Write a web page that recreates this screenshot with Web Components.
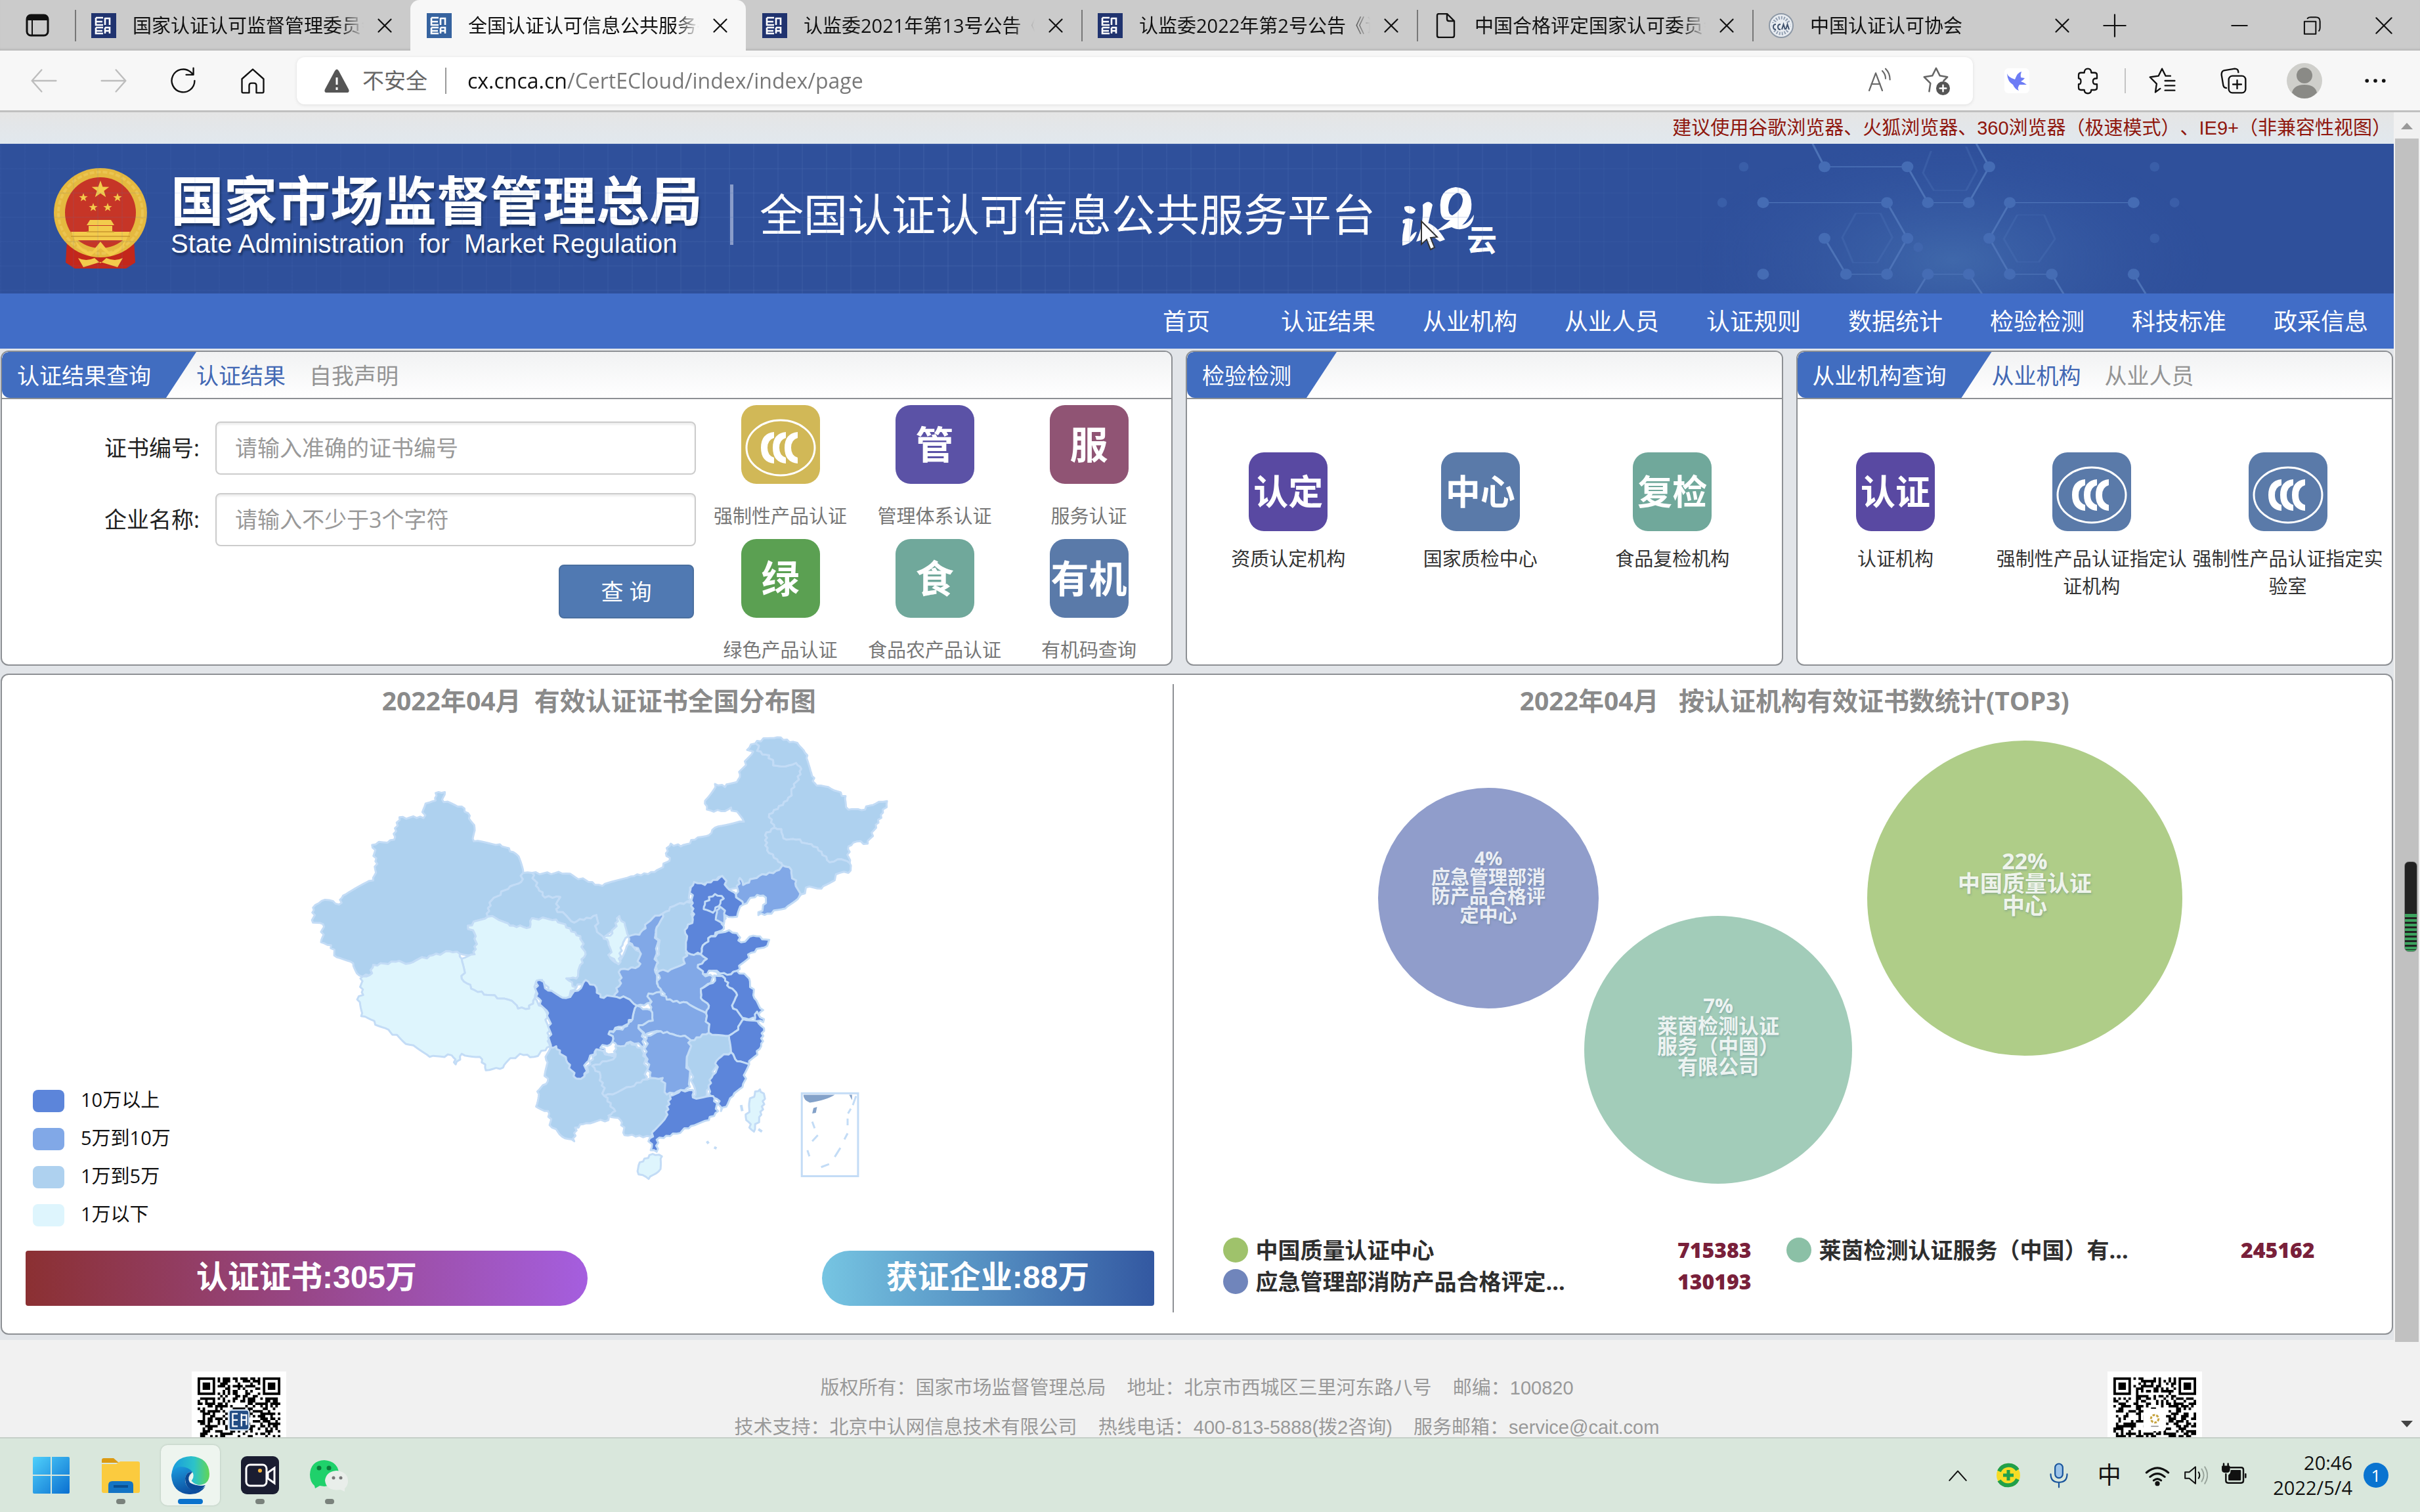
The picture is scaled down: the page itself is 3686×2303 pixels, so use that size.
<!DOCTYPE html>
<html lang="zh-CN">
<head>
<meta charset="utf-8">
<title>全国认证认可信息公共服务平台</title>
<style>
  html, body { margin: 0; height: 100%; }
  body {
    display: flex;
    flex-direction: column;
    overflow: hidden;
    background: #e2e5e9;
    color: #222;
    font: 29px/40px "Open Sans", "Noto Sans CJK SC", sans-serif;
  }
  main { flex: 1; min-height: 0; display: flex; overflow: hidden; }
  .page { flex: 1; min-width: 0; display: flex; flex-direction: column; }
  .page > * { flex-shrink: 0; }
  .notice {
    margin: 0;
    padding-right: 4px;
    background: linear-gradient(#e5e5e5, #e1e8ee);
    color: #8f170e;
    font-family: "Liberation Sans", "Noto Sans CJK SC", sans-serif;
    line-height: 48px;
    text-align: right;
    text-spacing-trim: space-all;
  }
  .row {
    display: grid;
    grid-template-columns: 1786fr 910fr 910fr;
    gap: 20px;
    margin: 3px 1px 0;
  }
  .query { display: flex; align-items: flex-start; }
  .grid { display: grid; grid-template-columns: repeat(3, 235px); row-gap: 14px; padding: 9px 8px 0 0; }
  .trio { display: grid; grid-template-columns: repeat(3, 1fr); padding: 81px 20px 0 8px; }
  .wide { padding-left: 0; padding-right: 9px; }
  .stats {
    display: grid;
    grid-template-columns: 1784fr 1859fr;
    margin: 12px 1px 8px;
    border: 2px solid #8d9094;
    border-radius: 12px;
    background: #fff;
  }
  .pane { display: flex; flex-direction: column; margin: 14px 0 32px; }
  .pane + .pane { border-left: 2px solid #8d9094; }
  h2 {
    margin: 0;
    padding-left: 36px;
    color: #8a8a8a;
    font-size: 39px;
    line-height: 50px;
    text-align: center;
    white-space: pre;
  }
  .stage { display: grid; grid-template-columns: 437px 960px; height: 813px; padding-top: 8px; box-sizing: border-box; }
  .bars { display: flex; justify-content: space-between; padding: 0 28px 10px 36px; }
</style>
</head>
<body>
<browser-tabs></browser-tabs>
<browser-toolbar></browser-toolbar>
<main>
  <div class="page">
    <p class="notice">建议使用谷歌浏览器、火狐浏览器、360浏览器（极速模式）、IE9+（非兼容性视图）</p>
    <site-banner></site-banner>
    <site-nav items="首页,认证结果,从业机构,从业人员,认证规则,数据统计,检验检测,科技标准,政采信息"></site-nav>
    <div class="row">
      <info-panel heading="认证结果查询" tabs="认证结果,自我声明">
        <div class="query">
          <cert-search></cert-search>
          <div class="grid">
            <service-tile color="#d1b857" label="强制性产品认证" muted></service-tile>
            <service-tile color="#5b52a6" glyph="管" label="管理体系认证" muted></service-tile>
            <service-tile color="#905474" glyph="服" label="服务认证" muted></service-tile>
            <service-tile color="#5ba052" glyph="绿" label="绿色产品认证" muted></service-tile>
            <service-tile color="#70a89b" glyph="食" label="食品农产品认证" muted></service-tile>
            <service-tile color="#5a7aa9" glyph="有机" label="有机码查询" muted></service-tile>
          </div>
        </div>
      </info-panel>
      <info-panel heading="检验检测">
        <div class="trio">
          <service-tile color="#5949a2" glyph="认定" label="资质认定机构"></service-tile>
          <service-tile color="#5a7aa9" glyph="中心" label="国家质检中心"></service-tile>
          <service-tile color="#70a89b" glyph="复检" label="食品复检机构"></service-tile>
        </div>
      </info-panel>
      <info-panel heading="从业机构查询" tabs="从业机构,从业人员">
        <div class="trio wide">
          <service-tile color="#5949a2" glyph="认证" label="认证机构"></service-tile>
          <service-tile color="#5a7aa9" label="强制性产品认证指定认证机构"></service-tile>
          <service-tile color="#5a7aa9" label="强制性产品认证指定实验室"></service-tile>
        </div>
      </info-panel>
    </div>
    <div class="stats">
      <section class="pane">
        <h2>2022年04月  有效认证证书全国分布图</h2>
        <div class="stage">
          <map-legend></map-legend>
          <china-map></china-map>
        </div>
        <div class="bars">
          <total-bar class="certs">认证证书:305万</total-bar>
          <total-bar class="firms">获证企业:88万</total-bar>
        </div>
      </section>
      <section class="pane">
        <h2>2022年04月   按认证机构有效证书数统计(TOP3)</h2>
        <bubble-chart></bubble-chart>
      </section>
    </div>
    <site-footer></site-footer>
  </div>
  <page-scrollbar></page-scrollbar>
</main>
<os-taskbar></os-taskbar>

<script>
function define(name, render) {
  customElements.define(name, class extends HTMLElement {
    constructor() {
      super();
      this.attachShadow({ mode: "open" });
    }
    connectedCallback() {
      this.shadowRoot.innerHTML = render(this);
    }
  });
}

// Line icon on a 24 unit grid.
function icon(body, size = 40, extra = "") {
  return `<svg width="${size}" height="${size}" viewBox="0 0 24 24" fill="none" stroke="currentColor" stroke-width="1.3" stroke-linecap="round" stroke-linejoin="round" aria-hidden="true" ${extra}>${body}</svg>`;
}

const BUTTON = `
  button {
    display: flex; align-items: center; justify-content: center;
    padding: 0; border: 0; background: none; color: #111; font: inherit;
  }`;

const CLOSE = icon('<path d="M6 6 18 18M18 6 6 18"/>', 38, 'style="stroke-width:1.4"');

function cncaIcon(bg) {
  return `<svg width="38" height="38" viewBox="0 0 38 38" aria-hidden="true">
    <rect width="38" height="38" fill="${bg}"/>
    <path d="M7 7h11M7 7v11h11M7 13h10M7 22h11M7 22v9h11M7 27h10M21 7v11M21 8h7v10M21 22h7v9M21 31v-9M21 27h7" fill="none" stroke="#fff" stroke-width="2.6"/></svg>`;
}

const PAGE_ICON = `<svg width="38" height="38" viewBox="0 0 38 38" fill="none" stroke="#111" stroke-width="2.4" aria-hidden="true">
  <path d="M8 1h13l11 11v22q0 3-3 3H9q-3 0-3-3V4q0-3 3-3M21 1v8q0 3 3 3h8"/></svg>`;

const CCAA_ICON = `<svg width="38" height="38" viewBox="0 0 38 38" aria-hidden="true">
  <circle cx="19" cy="19" r="18" fill="#e9edf2" stroke="#8d98a6" stroke-width="2"/>
  <circle cx="19" cy="19" r="12" fill="none" stroke="#93a0b2" stroke-width="5" stroke-dasharray="2 2"/>
  <rect x="5" y="15" width="28" height="11" fill="#e9edf2"/>
  <path d="M11 17q-4 0-4 4t4 4M18 17q-4 0-4 4t4 4M20 25l2.500-8 2.500 8M26 25l2.500-8 2.500 8" fill="none" stroke="#41536e" stroke-width="2"/></svg>`;

define("browser-tabs", () => {
  const tabs = [
    ["国家认证认可监督管理委员会", cncaIcon("#20336f")],
    ["全国认证认可信息公共服务平台", cncaIcon("#36639f"), true],
    ["认监委2021年第13号公告《认监委", cncaIcon("#20336f")],
    ["认监委2022年第2号公告《认监委", cncaIcon("#20336f")],
    ["中国合格评定国家认可委员会", PAGE_ICON],
    ["中国认证认可协会", CCAA_ICON],
  ];
  return `<style>
    :host { display: flex; height: 77px; background: #cbcbcb; box-shadow: inset 0 -4px 3px -2px #b5b5b5; }
    ${BUTTON}
    .tab { flex: 0 1 511px; min-width: 0; display: flex; align-items: center; box-sizing: border-box; padding-right: 20px; }
    .tab::before { content: ""; width: 2px; height: 48px; margin-right: 23px; background: #777; }
    .tab.on { background: #f7f7f7; border-radius: 14px 14px 0 0; }
    .tab.on::before, .tab.on + .tab::before { background: none; }
    .title {
      flex: 1; min-width: 0; margin: 0 13px 0 25px; overflow: hidden; white-space: nowrap; color: #111; text-align: left;
      -webkit-mask: linear-gradient(90deg, #000 90%, transparent);
    }
    svg { flex: none; }
    .menu { width: 114px; }
    .add { width: 82px; }
    .win { width: 110px; }
    .gap { flex: 1; }
  </style>
  <button class="menu" aria-label="标签页操作"><svg width="36" height="36" viewBox="0 0 36 36"><rect x="2" y="2" width="32" height="31" rx="6" fill="none" stroke="#111" stroke-width="3"/><path d="M2 10V8q0-6 6-6h20q6 0 6 6v2zM9 10h2v23H9z" fill="#111"/></svg></button>
  ${tabs.map(([t, i, on]) => `<div class="tab ${on ? "on" : ""}">${i}<span class="title">${t}</span><button aria-label="关闭">${CLOSE}</button></div>`).join("")}
  <button class="add" aria-label="新建标签页">${icon('<path d="M12 2v20M2 12h20"/>', 40)}</button>
  <span class="gap"></span>
  <button class="win" aria-label="最小化">${icon('<path d="M5 12h14"/>', 40)}</button>
  <button class="win" aria-label="还原">${icon('<path d="M5 8h11v12H5zM8 5q1-1 3-1h5q4 0 4 4v6q0 2-1 3"/>', 38)}</button>
  <button class="win" aria-label="关闭窗口">${icon('<path d="M5 5 19 19M19 5 5 19"/>', 40)}</button>`;
});

define("browser-toolbar", () => `<style>
    :host { display: flex; align-items: center; height: 91px; padding: 0 14px; background: #f7f7f7; border-bottom: 3px solid #c0c0c0; }
    ${BUTTON}
    button { width: 106px; height: 72px; }
    .off { color: #bdbdbd; }
    .address {
      flex: 1; display: flex; align-items: center; height: 72px; margin: 0 13px 0 14px; padding: 0 14px 0 42px;
      border-radius: 12px; background: #fff; box-shadow: 0 1px 5px #ddd; color: #666; font-size: 33px;
    }
    .address span { margin-left: 20px; padding-right: 27px; border-right: 2px solid #999; white-space: nowrap; }
    .address button { width: 86px; color: #666; }
    input {
      flex: 1; min-width: 0; height: 56px; margin: 0; padding: 0 0 0 32px; border: 0; outline: 0;
      color: #666; font: 32px "Open Sans", sans-serif;
      background: linear-gradient(90deg, #111 183px, #777 183px); -webkit-background-clip: text; -webkit-text-fill-color: transparent;
    }
    .tools { display: flex; align-items: center; }
    .tools button { width: 108px; }
    .tools i { width: 2px; height: 38px; margin: 0 2px; background: #c4c4c4; }
  </style>
  <button class="off" aria-label="后退">${icon('<path d="M22 12H2M10 3 2 12l8 9"/>', 44)}</button>
  <button class="off" aria-label="前进">${icon('<path d="M2 12h20M14 3l8 9-8 9"/>', 44)}</button>
  <button aria-label="刷新">${icon('<path d="M21.500 12A9.500 9.500 0 1 1 18 4.600l2 1.900M20.500 1.500v5.500h-6"/>', 44)}</button>
  <button aria-label="主页">${icon('<path d="M3 10.500 12 2.500l9 8V21q0 1-1 1h-5v-6q0-2-2-2h-2q-2 0-2 2v6H4q-1 0-1-1z"/>', 44)}</button>
  <div class="address">
    <svg width="38" height="36" viewBox="0 0 38 36" aria-hidden="true"><path d="M16 3q3-5 6 0l15 28q2 5-3 5H4q-5 0-3-5z" fill="#555"/><path d="M19 13v11M19 28v4" stroke="#fff" stroke-width="3"/></svg>
    <span>不安全</span>
    <input aria-label="地址" value="cx.cnca.cn/CertECloud/index/index/page">
    <button aria-label="朗读">${icon('<path d="M3 21 9 5l6 16M5 15h8M15 3q3 3 3 7M18 1q4 4 4 10"/>', 40)}</button>
    <button aria-label="收藏">${icon('<path d="M7 20.500l1-6.500-5-5 6.500-1L12.500 2l3 6 6 1-3 3"/><circle cx="18" cy="18" r="5.500" fill="#555" stroke="none"/><path d="M18 15.500v5M15.500 18h5" stroke="#fff"/>', 46)}</button>
  </div>
  <div class="tools">
    <button aria-label="扩展"><svg width="38" height="38" viewBox="0 0 38 38"><rect width="38" height="38" rx="6" fill="#fff"/><path d="M4 8q2 6 12 9Q20 6 26 5q-2 5-1 9l6 1q-3 4-6 5 6 2 9 5-6 0-11 0-4 5-1 9-6-2-9-9Q5 21 4 8z" fill="#6d7cf5"/></svg></button>
    <button aria-label="扩展管理">${icon('<path d="M4 7q0-2 2-2h3q0-3.500 3-3.500T15 5h3q2 0 2 2v3h-1q-2.500 0-2.500 2.500T19 15h1v3q0 2-2 2h-3q0 3-3 3t-3-3H6q-2 0-2-2v-3q2 0 2-2.500T4 10z"/>', 42)}</button>
    <i></i>
    <button aria-label="收藏夹">${icon('<path d="M6 21.500l1-7L1.500 9l7-1L11.500 2l3 6h4M14 12h8M14 16h8M14 20h8M6 21.500l4-3"/>', 44)}</button>
    <button aria-label="集锦">${icon('<rect x="8" y="8" width="14" height="14" rx="3"/><path d="M15 11.500v7M11.500 15h7M6 18q-2 0-2.500-2L2 7q0-3 2-3.500L13 2q3 0 3 3"/>', 44)}</button>
    <button aria-label="个人资料"><svg width="54" height="54" viewBox="0 0 54 54"><circle cx="27" cy="27" r="27" fill="#cfcfcb"/><circle cx="27" cy="19" r="12" fill="#8a8a86"/><path d="M8 45q3-12 19-12t19 12q-8 9-19 9T8 45z" fill="#8a8a86"/></svg></button>
    <button aria-label="设置及其他">${icon('<g fill="#111" stroke="none"><circle cx="3" cy="12" r="2"/><circle cx="12" cy="12" r="2"/><circle cx="21" cy="12" r="2"/></g>', 34)}</button>
  </div>`);

define("site-banner", () => {
  const star = "M0-10 2.400-3.200 9.500-3 3.800 1.200 5.900 8 0 4-5.900 8-3.800 1.200-9.500-3-2.400-3.200z";
  return `<style>
    :host { display: grid; height: 228px; background: #2f509b; overflow: hidden; color: #fff; }
    :host > * { grid-area: 1 / 1; }
    .mesh {
      background:
        repeating-linear-gradient(90deg, #5577bb44 0 2px, transparent 2px 37px),
        repeating-linear-gradient(#5577bb44 0 2px, transparent 2px 37px);
      -webkit-mask: linear-gradient(90deg, #0005 15%, #000b 40%, #0008 62%, transparent 75%);
    }
    .atoms { justify-self: end; opacity: .7; }
    .brand { display: flex; align-items: center; padding-left: 82px; }
    .name { margin: 0 0 11px 36px; text-shadow: 2px 4px 3px #1c3568; }
    .name strong { display: block; font-size: 81px; line-height: 86px; }
    .name span { display: block; font: 40px/46px "Liberation Sans", sans-serif; white-space: pre; }
    hr { width: 5px; height: 92px; margin: 0 40px 12px 42px; border: 0; background: #8a9dca; }
    h1 { margin: 0 0 15px; font-size: 67px; line-height: 90px; font-weight: 400; }
    .cloud { margin-left: 38px; }
  </style>
  <div class="mesh"></div>
  <svg class="atoms" width="1246" height="228" viewBox="0 27 1519 684" preserveAspectRatio="none" aria-hidden="true">
    <defs>
      <radialGradient id="glow"><stop offset="0" stop-color="#4b78b5" stop-opacity=".85"/><stop offset="1" stop-color="#3558a6" stop-opacity="0"/></radialGradient>
    </defs>
    <ellipse cx="700" cy="560" rx="480" ry="560" fill="url(#glow)"/>
    <g fill="none" stroke="#5a82c4" stroke-width="4">
      <path d="M440 27l22 105h154l38 164h76l38-164-24-105M348 296h230l38 163-38 164h-76l-40-164M1036 296H806l-38 163 38 164h78l22 90M632 711l22-88h76l24 88M1036 623l22 88"/>
      <path d="M540 345h-20l-25 110 20 115h45l28-115-22-110zM820 352l-25 110 25 105h40l30-105-20-110zM660 60l-15 100 20 80h60l20-90-20-110" opacity=".35"/>
    </g>
    <g fill="#4f78bf">
      ${[[462, 132], [616, 132], [768, 132], [578, 296], [654, 296], [730, 296], [806, 296], [616, 459], [768, 459], [462, 459], [502, 623], [578, 623], [654, 623], [730, 623], [806, 623], [884, 623], [348, 296], [348, 623], [1036, 296], [1036, 623]].map(([x, y]) => `<ellipse cx="${x}" cy="${y}" rx="11" ry="25"/>`).join("")}
      <g opacity=".5"><ellipse cx="312" cy="132" rx="9" ry="22"/><ellipse cx="1075" cy="132" rx="9" ry="22"/><ellipse cx="1075" cy="459" rx="9" ry="22"/><ellipse cx="1112" cy="296" rx="9" ry="22"/><ellipse cx="636" cy="500" rx="9" ry="22"/><ellipse cx="272" cy="296" rx="9" ry="22"/></g>
    </g>
  </svg>
  <div class="brand">
    <svg width="142" height="154" viewBox="0 0 142 154" role="img" aria-label="国徽">
      <path d="M20 108l-2 36 14 9h78l14-9-2-36z" fill="#c3271b"/>
      <ellipse cx="71" cy="68" rx="71" ry="68" fill="#e5b93f"/>
      <ellipse cx="71" cy="68" rx="64" ry="62" fill="none" stroke="#ebc552" stroke-width="4" stroke-dasharray="7 3"/>
      <circle cx="71" cy="68" r="54" fill="#c63527"/>
      <g fill="#f3cb4c">
        <g transform="translate(71 33) scale(1.400)"><path d="${star}"/></g>
        <g transform="translate(45 45) scale(.7)"><path d="${star}"/></g>
        <g transform="translate(97 45) scale(.7)"><path d="${star}"/></g>
        <g transform="translate(60 60) scale(.7)"><path d="${star}"/></g>
        <g transform="translate(82 60) scale(.7)"><path d="${star}"/></g>
        <path d="M55 79h32l5 8H50zM53 88h36v9H53zM26 97h90l-6 13H32z"/>
        <path d="M32 108q12 20 26 20l13-16 13 16q14 0 26-20-3 18-24 26l-15-12-15 12q-21-8-24-26zM37 137q12 6 25 0l9 8 9-8q13 6 25 0l-8 14-26-8-26 8z"/>
      </g>
      <path d="M50 97h42M26 104h90" stroke="#c9952c" stroke-width="1.500"/>
    </svg>
    <div class="name"><strong>国家市场监督管理总局</strong><span>State Administration  for  Market Regulation</span></div>
    <hr>
    <h1>全国认证认可信息公共服务平台</h1>
    <svg class="cloud" width="150" height="112" viewBox="0 0 150 112" fill="#fff" role="img" aria-label="认云">
      <path d="M6 38q10-4 17 4-1 8-10 6-8-3-7-10zM4 58q9-5 15 0l-4 26q6-8 10-8-5 18-22 21-1-16 4-34-5 2-3-5z"/>
      <path d="M34 35q9-9 15 0l-7 30q-3 24-18 26 12-26 10-56z"/>
      <path d="M40 62q15 4 28 26l-8 3q-16-11-21-22z"/>
      <path fill-rule="evenodd" d="M61 42Q58 11 84 8q27 2 24 33-2 14-14 25 10-3 18-16-1 20-20 22-6 1-14-3-9 3-24 6 14-9 22-17-15 2-15-16zm18 9Q95 42 95 26 93 16 86 17 74 22 73 39q0 11 6 12z"/>
      <path d="M62 74q12-8 26-30l8 3Q84 68 62 74z"/>
      <text x="101" y="105" font-size="46" font-weight="700">云</text>
      <path d="M32 60l24 24-10 1 6 15-6 3-6-15-8 7z" stroke="#333" stroke-width="2"/>
    </svg>
  </div>`;
});

define("site-nav", (el) => `<style>
    :host { display: block; background: #416dc7; }
    nav { display: flex; justify-content: flex-end; padding: 2px 3px 0 0; }
    a { width: 216px; color: #fff; font-size: 36px; line-height: 82px; text-align: center; text-decoration: none; }
  </style>
  <nav>${el.getAttribute("items").split(",").map((t) => `<a href="#">${t}</a>`).join("")}</nav>`);

define("info-panel", (el) => {
  const tabs = el.getAttribute("tabs");
  return `<style>
    :host { display: block; height: 480px; box-sizing: border-box; border: 2px solid #8d9094; border-radius: 12px; background: #fff; overflow: hidden; }
    header { display: flex; height: 70px; border-bottom: 2px solid #8d9094; background: linear-gradient(#f1f2f3, #fff); font-size: 34px; line-height: 72px; }
    h3 {
      margin: 0; padding: 0 69px 0 23px; background: #416dc0; color: #fff; font: inherit;
      border-radius: 10px 0 0 12px; clip-path: polygon(0 0, 100% 0, calc(100% - 46px) 100%, 0 100%);
    }
    a { margin-right: 36px; color: #4268b4; text-decoration: none; }
    a + a { color: #949494; }
  </style>
  <header><h3>${el.getAttribute("heading")}</h3>${tabs ? tabs.split(",").map((t) => `<a href="#">${t}</a>`).join("") : ""}</header>
  <slot></slot>`;
});

define("cert-search", () => `<style>
    :host { display: block; flex: 1; }
    form {
      display: grid; grid-template-columns: 1fr 732px; gap: 28px 24px; padding: 34px 11px 0 0;
      font-size: 34px; line-height: 81px; align-items: center;
    }
    label { text-align: right; }
    input {
      height: 81px; box-sizing: border-box; padding: 0 28px; border: 2px solid #ccc; border-radius: 8px;
      box-shadow: inset 0 3px 3px #eee; font: inherit;
    }
    input::placeholder { color: #999; opacity: 1; }
    button {
      grid-column: 2; justify-self: end; width: 206px; height: 82px; margin-right: 3px; padding: 0;
      border: 2px solid #4a6f9f; border-radius: 8px; background: #5079b2; color: #fff; font: inherit; line-height: 76px;
    }
  </style>
  <form>
    <label for="cert">证书编号:</label><input id="cert" placeholder="请输入准确的证书编号">
    <label for="firm">企业名称:</label><input id="firm" placeholder="请输入不少于3个字符">
    <button type="button">查 询</button>
  </form>`);

// Falls back to the CCC mark when no glyph is given.
define("service-tile", (el) => {
  const glyph = el.getAttribute("glyph");
  const muted = el.hasAttribute("muted");
  const c = "M14-24Q-6-22-6 0T14 24V15Q4 12 4 0T14-15z";
  return `<style>
    :host { display: block; }
    a { display: flex; flex-direction: column; align-items: center; color: ${muted ? "#777" : "#333"}; text-align: center; text-decoration: none; }
    .mark {
      display: flex; align-items: center; justify-content: center; width: 120px; height: 120px; border-radius: 23px;
      background: ${el.getAttribute("color")}; color: #fff; font-size: ${muted ? 58 : 53}px; font-weight: 700; white-space: nowrap;
    }
    .label { margin-top: ${muted ? 28 : 21}px; padding: 0 4px; line-height: 42px; }
  </style>
  <a href="#"><span class="mark">${glyph || `<svg width="120" height="120" viewBox="-60 -60 120 120" fill="#fff" aria-hidden="true">
    <ellipse cy="5" rx="52" ry="42" fill="none" stroke="#fff" stroke-width="3"/>
    <g transform="translate(-24 5)"><path d="${c}"/></g><g transform="translate(-6 5)"><path d="${c}"/></g><g transform="translate(12 5)"><path d="${c}"/></g></svg>`}</span>
  <span class="label">${el.getAttribute("label")}</span></a>`;
});

const LEVELS = { a: "#5c85da", b: "#81a8e7", c: "#aed1ef", d: "#def5fd" };

define("map-legend", () => `<style>
    :host { display: block; align-self: end; }
    ul { margin: 0; padding: 0 0 27px 47px; list-style: none; color: #111; }
    li { display: flex; align-items: center; height: 58px; }
    i { width: 48px; height: 34px; margin: 3px 25px 0 0; border-radius: 8px; }
  </style>
  <ul>${[["a", "10万以上"], ["b", "5万到10万"], ["c", "1万到5万"], ["d", "1万以下"]].map(([k, t]) => `<li><i style="background:${LEVELS[k]}"></i>${t}</li>`).join("")}</ul>`);

const PROVINCES = [
  ["c", "1165,62 1140,92 1155,98 1120,165 1118,190 1085,215 1060,205 1035,270 1040,290 1075,295 1100,283 1132,330 1060,350 1045,375 1010,390 975,412 950,403 938,435 947,460 910,497 850,512 780,543 745,530 690,502 605,500 620,550 637,582 675,580 665,620 710,665 765,640 765,685 785,718 812,690 822,643 835,700 848,710 872,705 905,650 930,635 965,605 1000,592 998,548 1035,535 1060,530 1078,510 1095,555 1115,550 1122,517 1130,540 1170,510 1220,490 1228,475 1215,455 1190,425 1185,375 1208,350 1195,305 1240,260 1258,215 1275,155 1262,135 1235,147 1205,143 1195,110 1165,95"],
  ["c", "1165,62 1215,50 1255,65 1275,85 1290,110 1300,170 1313,210 1350,222 1385,245 1392,290 1425,292 1460,270 1488,262 1478,300 1460,340 1440,403 1412,396 1392,412 1395,467 1365,455 1345,465 1325,430 1300,405 1262,390 1230,385 1225,355 1208,350 1195,305 1240,260 1258,215 1275,155 1262,135 1235,147 1205,143 1195,110 1165,95"],
  ["c", "1185,375 1208,350 1225,355 1230,385 1262,390 1300,405 1325,430 1345,465 1365,455 1395,467 1392,500 1370,500 1350,530 1325,552 1295,545 1270,578 1260,535 1250,490 1228,475 1215,455 1190,425"],
  ["c", "388,232 385,265 430,280 450,310 462,350 460,395 525,405 565,437 583,500 578,530 550,545 505,590 495,645 445,675 465,710 462,770 425,768 400,760 350,775 300,800 265,795 210,805 200,840 175,840 160,800 120,780 105,740 80,730 85,670 60,665 60,615 75,600 100,590 125,605 135,575 210,525 215,490 220,470 207,407 262,390 275,315 335,318 340,270 365,260 365,235"],
  ["c", "583,500 605,500 620,550 637,582 675,580 665,620 710,665 765,640 765,685 785,718 795,730 805,790 820,800 845,735 872,760 870,810 825,820 822,875 808,910 775,912 765,880 735,860 715,880 700,900 690,850 715,850 722,815 738,770 725,710 665,655 605,650 600,680 550,675 515,650 495,645 505,590 550,545 578,530"],
  ["d", "495,645 445,675 465,710 462,770 430,785 435,860 470,895 545,920 570,950 598,950 612,915 615,860 630,855 645,890 690,915 715,880 690,850 715,850 722,815 738,770 725,710 665,655 605,650 600,680 550,675 515,650"],
  ["d", "425,768 430,785 435,860 470,895 545,920 570,950 598,950 612,915 640,960 650,1075 610,1110 575,1100 540,1130 525,1150 490,1155 475,1110 430,1100 415,1135 405,1105 350,1110 300,1070 240,1015 180,975 170,920 185,905 178,850 200,840 210,805 265,795 300,800 350,775 400,760"],
  ["d", "822,643 835,665 845,710 830,740 820,803 800,780 795,730 783,718 805,700"],
  ["c", "650,1075 665,1075 690,1120 715,1182 735,1175 765,1085 812,1110 790,1125 755,1140 775,1170 785,1240 812,1290 795,1320 740,1330 712,1345 710,1390 680,1375 655,1345 645,1290 615,1275 618,1225 640,1200 640,1120"],
  ["c", "812,1075 850,1060 880,1090 890,1140 888,1205 850,1210 805,1235 785,1240 775,1170 755,1140 790,1125 812,1110"],
  ["c", "785,1240 805,1235 850,1210 900,1180 930,1180 948,1240 938,1310 915,1350 900,1375 835,1370 825,1320 795,1305 812,1290"],
  ["c", "930,635 965,605 1005,592 1005,655 985,690 998,720 988,765 985,800 950,820 915,832 915,790 920,750 915,680"],
  ["c", "1000,1055 1045,1030 1095,1040 1100,1095 1070,1115 1045,1215 1035,1245 1005,1245 1010,1215 995,1150 990,1110"],
  ["b", "930,635 905,650 880,690 872,705 845,710 845,730 872,760 870,810 825,820 822,875 808,910 840,915 865,940 900,930 895,900 925,895 912,830 915,760 915,680"],
  ["b", "915,832 950,820 985,800 988,765 1025,770 1040,785 1018,805 1030,835 1055,845 1050,865 1025,885 1025,915 1045,940 1038,965 990,930 940,920 925,885"],
  ["b", "895,900 925,895 940,920 990,930 1038,965 1045,1030 1000,1055 985,1040 955,1035 925,1025 885,1040 870,1005 905,990 900,955"],
  ["b", "865,940 900,955 905,990 870,1005 885,1050 880,1090 870,1065 850,1060 825,1075 805,1060 798,1025 830,1020 855,985"],
  ["b", "890,1040 925,1025 955,1035 985,1040 1000,1055 990,1110 998,1210 975,1220 940,1235 930,1180 900,1180 888,1110"],
  ["b", "1122,517 1130,540 1170,510 1220,490 1228,475 1250,490 1260,535 1270,578 1235,618 1190,635 1168,640 1187,600 1180,575 1165,573 1130,605 1112,570"],
  ["a", "1000,548 1008,530 1035,540 1078,510 1095,555 1112,570 1130,605 1115,645 1085,640 1080,660 1082,685 1050,710 1030,740 1025,770 992,765 990,720 985,690 1005,655 1005,600"],
  ["a", "1045,580 1060,570 1082,585 1070,610 1055,632 1032,620 1035,605"],
  ["b", "1070,610 1085,625 1082,670 1062,655 1065,632"],
  ["a", "1025,770 1030,740 1050,710 1095,690 1115,700 1125,730 1155,708 1195,722 1190,742 1150,765 1115,825 1090,838 1055,825 1030,835 1018,805 1040,785"],
  ["a", "1055,825 1090,838 1115,825 1145,850 1158,915 1180,955 1165,985 1125,980 1105,950 1115,905 1095,880 1085,850"],
  ["a", "1058,840 1085,850 1095,880 1115,905 1105,950 1130,985 1118,1020 1095,1040 1045,1030 1038,965 1045,940 1025,915 1025,885 1055,865"],
  ["a", "1130,985 1165,990 1182,1015 1175,1075 1145,1135 1115,1125 1100,1095 1095,1040 1118,1020"],
  ["a", "1165,960 1182,985 1180,995 1158,990"],
  ["a", "1070,1115 1100,1095 1115,1125 1145,1135 1130,1200 1105,1240 1075,1290 1065,1250 1045,1235 1045,1215 1055,1170"],
  ["a", "948,1240 975,1220 1005,1220 1005,1245 1055,1240 1068,1290 1045,1320 1000,1340 965,1365 915,1385 915,1425 900,1420 898,1380 938,1310"],
  ["a", "625,855 645,890 690,915 720,890 738,855 765,880 775,912 808,910 840,915 865,940 855,985 830,1010 798,1025 805,1060 775,1080 812,1110 765,1085 740,1130 735,1175 715,1182 690,1120 665,1075 652,1080 645,965 615,910 615,865"],
  ["d", "1172,1218 1183,1240 1170,1310 1157,1358 1138,1320 1145,1265 1160,1225"],
  ["d", "905,1432 928,1440 920,1490 895,1515 870,1500 873,1460"],
];

// Roughens an outline; an edge shared by two provinces gets the same bumps.
function coast(points) {
  const pts = points.split(" ").map((p) => p.split(",").map(Number));
  const out = [];
  pts.forEach((p, i) => {
    const q = pts[(i + 1) % pts.length];
    const flip = p[0] > q[0] || (p[0] === q[0] && p[1] > q[1]);
    const [a, b] = flip ? [q, p] : [p, q];
    const dx = b[0] - a[0];
    const dy = b[1] - a[1];
    const len = Math.hypot(dx, dy);
    const n = Math.max(1, Math.round(len / 9));
    const edge = [];
    for (let k = 1; k < n; k++) {
      const r = Math.sin(a[0] * 12.9 + a[1] * 78.2 + k * 37.7) * 43758.5;
      const off = (r - Math.floor(r) - 0.5) * 10;
      edge.push([a[0] + (dx * k) / n - (dy / len) * off, a[1] + (dy * k) / n + (dx / len) * off]);
    }
    if (flip) edge.reverse();
    out.push(p, ...edge);
  });
  return "M" + out.map(([x, y]) => `${x.toFixed(1)} ${y.toFixed(1)}`).join("L") + "z";
}

define("china-map", () => `<style>
    :host { display: block; }
    svg { display: block; }
    path, rect { vector-effect: non-scaling-stroke; }
  </style>
  <svg width="960" height="720" viewBox="0 0 1568 1568" preserveAspectRatio="none" role="img" aria-label="有效认证证书全国分布图">
    <g stroke="#c3dcf6" stroke-width="3" stroke-linejoin="round">
      ${PROVINCES.map(([k, p]) => `<path fill="${LEVELS[k]}" d="${coast(p)}"/>`).join("")}
    </g>
    <g fill="none" stroke="#c3dcf6" stroke-width="3">
      <rect x="1276" y="1231" width="140" height="275"/>
      <path d="M1302 1325l6 22M1316 1370l-14 20M1290 1420l5 20M1324 1476l20-10M1372 1412l-14 30M1390 1364l-8 20M1390 1315v22M1398 1282l-7 16M1411 1240l-8 30"/>
      <path d="M1040 1390l4 8M1058 1410l6 4M1125 1270l3 20M1168 1350l9 8" stroke-width="4"/>
    </g>
    <path d="M1280 1236h78q-20 18-62 26-16-8-16-26zM1394 1236h7v18zM1305 1280l9-4-3 20-9 2z" fill="#84a2c9"/>
  </svg>`);

define("total-bar", () => `<style>
    :host { display: block; width: 856px; height: 84px; color: #fff; font: 700 48px/82px "Liberation Sans", "Noto Sans CJK SC", sans-serif; text-align: center; }
    :host(.certs) { border-radius: 4px 42px 42px 4px; background: linear-gradient(90deg, #8b3032, #a55edf); }
    :host(.firms) { width: 506px; border-radius: 42px 4px 4px 42px; background: linear-gradient(90deg, #76c5e2, #3358a1); }
  </style><slot></slot>`);

define("bubble-chart", () => {
  // x, y, radius, fill, text size, distance from the centre up to the text, lines
  const bubbles = [
    [479, 268, 168, "#909dcb", 29, 50, ["4%", "应急管理部消", "防产品合格评", "定中心"]],
    [829, 499, 204, "#a2ccb9", 31, 56, ["7%", "莱茵检测认证", "服务（中国）", "有限公司"]],
    [1296, 268, 240, "#afcd88", 34, 44, ["22%", "中国质量认证", "中心"]],
  ];
  const rows = [
    ["#9fc26b", "中国质量认证中心", "715383"],
    ["#8bc0a6", "莱茵检测认证服务（中国）有...", "245162"],
    ["#7085bb", "应急管理部消防产品合格评定...", "130193"],
  ];
  return `<style>
    :host { display: block; padding-top: 8px; }
    svg { display: block; margin-bottom: 60px; }
    text { font-weight: 700; fill: #fffd; text-anchor: middle; text-shadow: 1px 2px 3px #5a7f8a77; }
    ul { display: grid; grid-template-columns: 858px 858px; margin: 0; padding: 0 0 0 75px; list-style: none; }
    li { display: flex; align-items: center; width: 805px; height: 48px; color: #2e2e2e; font-size: 34px; font-weight: 700; }
    i { width: 38px; height: 38px; margin-right: 12px; border-radius: 50%; }
    b { margin-left: auto; color: #79203a; font-size: 32px; }
  </style>
  <svg width="1760" height="720" viewBox="0 0 1760 720" role="img" aria-label="按认证机构有效证书数统计">
    ${bubbles.map(([x, y, r, fill, size, up, lines]) => `<circle cx="${x}" cy="${y}" r="${r}" fill="${fill}"/>
      ${lines.map((t, i) => `<text x="${x}" y="${y - up + i * size}" font-size="${size}">${t}</text>`).join("")}`).join("")}
  </svg>
  <ul>${rows.map(([c, t, n]) => `<li><i style="background:${c}"></i>${t}<b>${n}</b></li>`).join("")}</ul>`;
});

define("qr-code", (el) => {
  const n = 33;
  const seed = Number(el.getAttribute("seed"));
  let d = "";
  const corner = (x, y) => (x < 8 && y < 8) || (x >= n - 8 && y < 8) || (x < 8 && y >= n - 8);
  for (let y = 0; y < n; y++) {
    for (let x = 0; x < n; x++) {
      const r = Math.sin(x * 127.1 + y * 311.7 + seed) * 43758.5;
      if (!corner(x, y) && r - Math.floor(r) > 0.5) d += `M${x} ${y}h1v1h-1z`;
    }
  }
  for (const [x, y] of [[0, 0], [n - 7, 0], [0, n - 7]]) {
    d += `M${x} ${y}h7v7h-7zM${x + 1} ${y + 1}v5h5v-5zM${x + 2} ${y + 2}h3v3h-3z`;
  }
  const logo = seed === 1
    ? '<rect x="12.500" y="13" width="8" height="8" rx="1" fill="#234d84" stroke="#cfe0f0" stroke-width=".6"/><path d="M16 14.500h-2v5h2M14 17h2M17.500 14.500v5M17.500 15h2v4M17.500 17h2" fill="none" stroke="#fff" stroke-width=".6"/>'
    : '<rect x="12" y="12.500" width="9" height="9" rx="1.500" fill="#fff"/><circle cx="16.500" cy="16.500" r="1.500" fill="none" stroke="#c6a441" stroke-width=".8" stroke-dasharray="1 .5"/><path d="M15 19.500h3" stroke="#888" stroke-width=".4"/>';
  return `<style>
    :host { display: block; padding: 9px; background: #fff; }
    svg { display: block; }
  </style>
  <svg width="126" height="126" viewBox="0 0 ${n} ${n}" role="img" aria-label="二维码"><path d="${d}"/>${logo}</svg>`;
});

define("site-footer", () => `<style>
    :host {
      display: flex; justify-content: space-between; align-items: flex-start; padding: 43px 292px 0; background: #f1f1f1;
      color: #999; font-family: "Liberation Sans", "Noto Sans CJK SC", sans-serif;
    }
    p { margin: 0; line-height: 60px; text-align: center; white-space: pre; }
    qr-code { margin-top: 5px; }
    qr-code:first-child { border: 1px solid #b9b58e; }
  </style>
  <qr-code seed="1"></qr-code>
  <div>
    <p>版权所有：国家市场监督管理总局    地址：北京市西城区三里河东路八号    邮编：100820</p>
    <p>技术支持：北京中认网信息技术有限公司    热线电话：400-813-5888(拨2咨询)    服务邮箱：service@cait.com</p>
  </div>
  <qr-code seed="2"></qr-code>`);

define("page-scrollbar", () => `<style>
    :host { display: flex; flex-direction: column; align-items: center; position: relative; width: 40px; background: #f1f1f1; }
    svg { flex: none; width: 20px; height: 40px; }
    .thumb { width: 36px; flex: 1834; background: #c1c1c1; }
    .rest { flex: 105; }
    /* Floating meter that sits on top of the scrollbar. */
    .meter {
      position: absolute; right: 4px; top: 1141px; width: 20px; height: 138px; border-radius: 7px; border: 1px solid #888; box-sizing: border-box;
      background: repeating-linear-gradient(transparent 0 4px, #222 4px 7px) 0 80px / 100% 54px no-repeat, linear-gradient(#222 58%, #3da35f 58%);
    }
  </style>
  <svg viewBox="0 0 20 40" aria-hidden="true"><path d="M1 26 10 16l9 10z" fill="#999"/></svg>
  <div class="thumb"></div>
  <div class="rest"></div>
  <svg viewBox="0 0 20 40" aria-hidden="true"><path d="M1 15l9 10 9-10z" fill="#444"/></svg>
  <div class="meter"></div>`);

define("os-taskbar", () => `<style>
    :host { display: flex; align-items: center; height: 112px; padding: 0 48px 0 33px; border-top: 2px solid #c6d0c8; background: #d9e7dc; color: #111; }
    ${BUTTON}
    .app { position: relative; width: 90px; height: 92px; margin-right: 16px; border-radius: 10px; }
    .app.on { background: #eef5ef; box-shadow: 0 0 3px #aebdb2; }
    .app i { position: absolute; left: 38px; bottom: 2px; width: 14px; height: 8px; border-radius: 4px; background: #7a827c; }
    .app.on i { left: 26px; width: 38px; background: #0a72cd; }
    .gap { flex: 1; }
    .tray button { width: 77px; height: 80px; }
    .tray, .group { display: flex; align-items: center; }
    .group { margin-left: 6px; }
    .group button { width: 58px; }
    .ime { font-size: 36px; }
    time { margin: 0 17px 0 31px; line-height: 38px; text-align: right; }
    .badge { width: 38px; height: 38px; border-radius: 50%; background: #0a74d0; color: #fff; font-size: 26px; line-height: 38px; text-align: center; }
  </style>
  <button class="app" aria-label="开始"><svg width="56" height="56" viewBox="0 0 56 56"><defs><linearGradient id="w" x2="1" y2="1"><stop offset="0" stop-color="#4fd0fb"/><stop offset="1" stop-color="#0a6fd0"/></linearGradient></defs><path d="M0 2q0-2 2-2h25v27H0zM29 0h25q2 0 2 2v25H29zM0 29h27v27H2q-2 0-2-2zM29 29h27v25q0 2-2 2H29z" fill="url(#w)"/></svg></button>
  <button class="app" aria-label="文件资源管理器"><svg width="58" height="54" viewBox="0 0 58 54"><path d="M0 4q0-3 3-3h15l8 7H0z" fill="#dc9a12"/><path d="M0 10h22l6-4h27q3 0 3 3v42q0 3-3 3H3q-3 0-3-3z" fill="#fbcb3f"/><path d="M10 54V42q0-6 6-6h26q6 0 6 6v12z" fill="#1474c4"/><path d="M18 44h22" stroke="#0a4f92" stroke-width="4"/></svg><i></i></button>
  <button class="app on" aria-label="Microsoft Edge"><svg width="60" height="60" viewBox="0 0 60 60"><defs><linearGradient id="e1" x2="1"><stop offset="0" stop-color="#1899de"/><stop offset=".6" stop-color="#2cc3c9"/><stop offset="1" stop-color="#62d655"/></linearGradient><linearGradient id="e2" y2="1" x2=".4"><stop offset="0" stop-color="#1c9de0"/><stop offset="1" stop-color="#0c4d9e"/></linearGradient></defs>
    <path d="M1 31Q3 2 31 1q27 2 28 27 0 16-16 17-13 0-11-7 6-8-1-15Q18 14 1 31z" fill="url(#e1)"/>
    <path d="M1 31q2-13 14-14 12 0 18 8-9-1-11 9-1 16 14 18 10 1 17-5-9 13-25 12Q3 57 1 31z" fill="url(#e2)"/>
    <path d="M22 34q2-10 11-9-7 8 0 16 7 7 20 4-5 8-17 8-14-2-14-19z" fill="#0b4a96"/><path d="M33 25q-6 7-1 14 5 6 14 6-10 1-17-4-5-8 4-16z" fill="#eef5ef"/></svg><i></i></button>
  <button class="app" aria-label="录屏"><svg width="58" height="58" viewBox="0 0 58 58"><rect width="58" height="58" rx="9" fill="#1a1d31"/><rect x="8" y="13" width="31" height="32" rx="6" fill="none" stroke="#fff" stroke-width="3"/><path d="M41 25l10-7v23l-10-7z" fill="none" stroke="#fff" stroke-width="3"/><circle cx="29" cy="22" r="3" fill="#f3b33d"/></svg><i></i></button>
  <button class="app" aria-label="微信"><svg width="60" height="50" viewBox="0 0 60 50"><path d="M7 41q-7-6-7-17Q1 3 22 2q21 2 22 20-1 18-22 20l-7-1-7 4z" fill="#1fd16b"/><circle cx="14" cy="14" r="3.500" fill="#0b7a39"/><circle cx="29" cy="14" r="3.500" fill="#0b7a39"/><path d="M23 33q2-14 18-15 17 2 17 16 0 7-5 11v5l-6-3q-22 3-24-14z" fill="#e9eeea"/><circle cx="36" cy="29" r="2.500" fill="#777"/><circle cx="47" cy="29" r="2.500" fill="#777"/></svg><i></i></button>
  <span class="gap"></span>
  <div class="tray">
    <button aria-label="显示隐藏的图标">${icon('<path d="M4 17 12 8l8 9"/>', 38)}</button>
    <button aria-label="安全卫士"><svg width="38" height="38" viewBox="0 0 38 38"><circle cx="19" cy="19" r="18" fill="#f7dc25"/><path d="M5 13A16 16 0 0 1 33 11M33 25A16 16 0 0 1 5 27" fill="none" stroke="#21a04a" stroke-width="6"/><path d="M19 11v16M11 19h16" stroke="#21a04a" stroke-width="5"/></svg></button>
    <button aria-label="麦克风" style="color:#17539b">${icon('<rect x="8.500" y="1.500" width="7" height="13" rx="3.500" fill="#9cc4ea"/><path d="M4.500 11q0 7.500 7.500 7.500t7.500-7.500M12 18.500V23"/>', 40)}</button>
    <button class="ime" aria-label="输入法">中</button>
    <div class="group">
      <button aria-label="网络">${icon('<path d="M1.500 9.500q10.500-9 21 0M5 13.500q7-6 14 0M8.500 17q3.500-3 7 0"/><circle cx="12" cy="20" r="1.300" fill="#111"/>', 38, 'style="stroke-width:2"')}</button>
      <button aria-label="音量">${icon('<path d="M2 9h4l6-5v16l-6-5H2zM15 9q2 3 0 6"/><path d="M18 6q4 6 0 12M21 4q5 8 0 16" stroke="#9aa69d"/>', 38)}</button>
      <button aria-label="电池">${icon('<path d="M9 5h10q2 0 2 2v10q0 2-2 2H7q-2 0-2-2v-6M23 11v3"/><path d="M10 8h8v8H8v-4q2-1 2-4z" fill="#111"/><path d="M2 4h6v3q0 2-3 2T2 7zM3 1.500V4M7 1.500V4" fill="#111"/>', 40, 'style="stroke-width:1.5"')}</button>
    </div>
    <time>20:46<br>2022/5/4</time>
    <span class="badge">1</span>
  </div>`);
</script>
</body>
</html>
